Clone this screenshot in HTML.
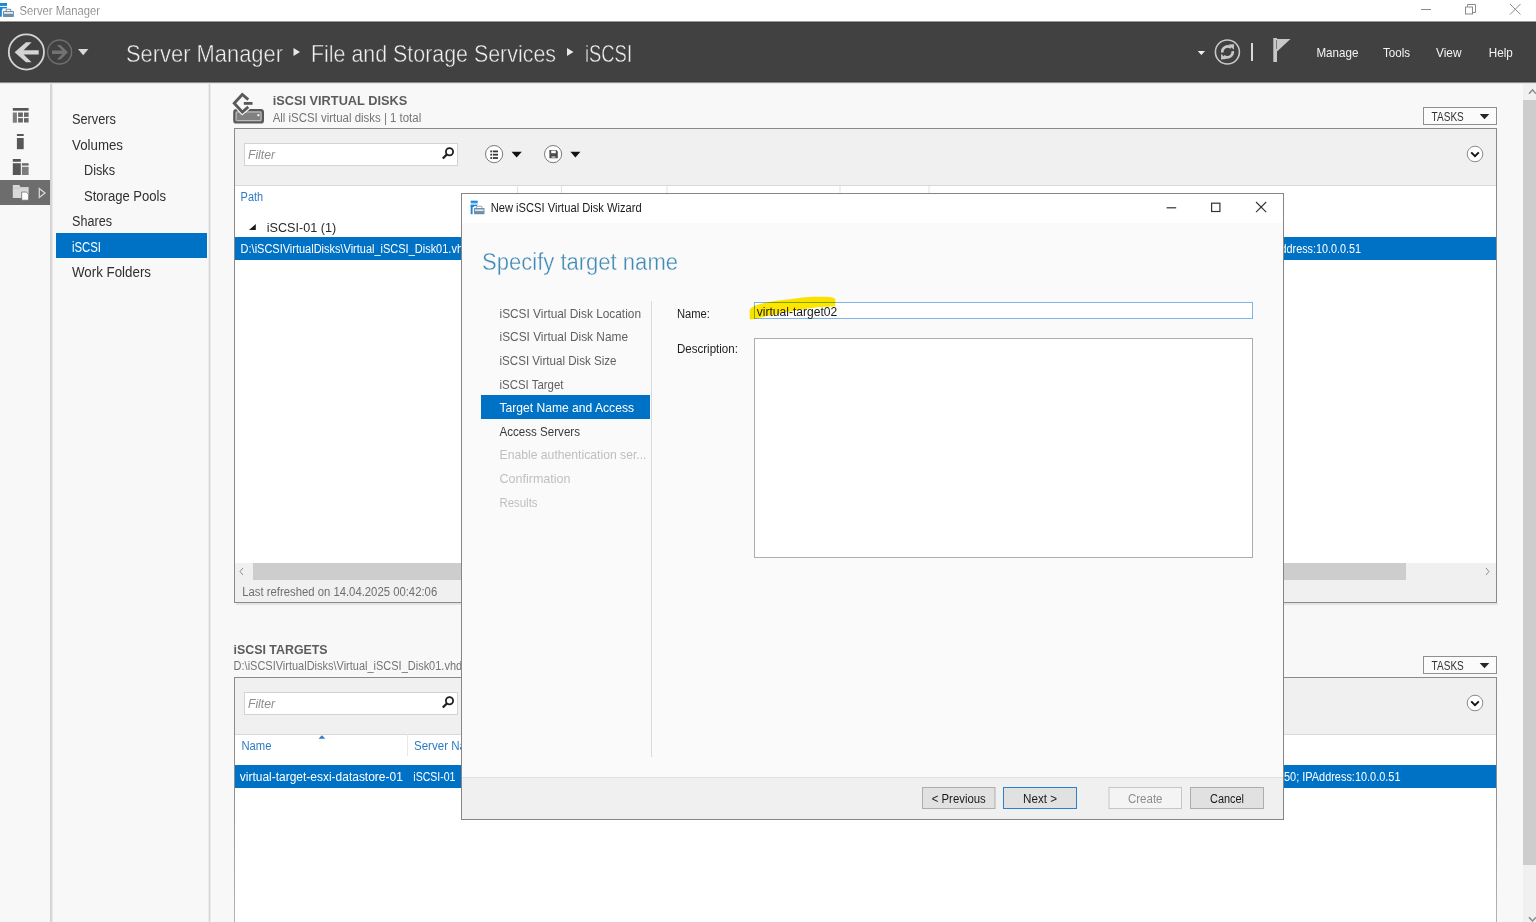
<!DOCTYPE html>
<html><head><meta charset="utf-8"><title>Server Manager - iSCSI</title>
<style>html,body{margin:0;padding:0;background:#f8f8f8;overflow:hidden;width:1536px;height:922px} svg{display:block} text{white-space:pre}</style>
</head><body>
<svg width="1536" height="922" viewBox="0 0 1536 922" font-family='"Liberation Sans", sans-serif' shape-rendering="auto"><rect x="0" y="0" width="1536" height="922" fill="#f8f8f8" />
<rect x="0" y="0" width="1536" height="22" fill="#ffffff" />
<rect x="0" y="3" width="7" height="2.9" fill="#1a85d9" />
<path d="M0 7 H7 V8.4 L5 10.2 H1.8 V16.8 H0 Z" fill="#1a85d9"/>
<rect x="2.4" y="8.4" width="12.3" height="9" fill="#ffffff" />
<path d="M6.2 11 V9.8 Q6.2 9.2 6.8 9.2 H10.2 Q10.8 9.2 10.8 9.8 V11" fill="none" stroke="#7892a8" stroke-width="1.1"/>
<rect x="3" y="10.9" width="10.9" height="6" fill="#6f8ea8" rx="0.6"/>
<rect x="4" y="12" width="8.9" height="1.8" fill="#e3eaf0" />
<text x="19.5" y="14.8" font-size="12.6" fill="#747474" font-weight="normal" font-style="normal" textLength="80.5" lengthAdjust="spacingAndGlyphs" stroke="#ffffff" stroke-width="0.2">Server Manager</text>
<line x1="1421" y1="9.5" x2="1431" y2="9.5" stroke="#8a8a8a" stroke-width="1" />
<rect x="1465.5" y="7.0" width="7" height="7" fill="none" stroke="#8a8a8a" stroke-width="1" />
<path d="M1467.5 6.5 V4.5 H1475.5 V12.5 H1473" fill="none" stroke="#8a8a8a" stroke-width="1"/>
<line x1="1510" y1="4" x2="1520.5" y2="14.5" stroke="#8a8a8a" stroke-width="1" />
<line x1="1520.5" y1="4" x2="1510" y2="14.5" stroke="#8a8a8a" stroke-width="1" />
<rect x="0" y="22" width="1536" height="60" fill="#414141" />
<rect x="0" y="21" width="1536" height="1" fill="#9c9c9c" />
<rect x="0" y="22" width="1536" height="1" fill="#393939" />
<circle cx="26.4" cy="52" r="17.6" fill="none" stroke="#d4d4d4" stroke-width="1.8"/>
<path d="M14.6 52.3 L26 42.2 L31.6 42.2 L23.6 50.2 L38.7 50.2 L38.7 54.5 L23.6 54.5 L31.6 62.3 L26 62.3 Z" fill="#d4d4d4"/>
<circle cx="59.6" cy="52" r="12" fill="none" stroke="#6f6f6f" stroke-width="1.4"/>
<path d="M68 52.3 L60.5 45.1 L57 45.1 L62.3 50.6 L52 50.6 L52 53.9 L62.3 53.9 L57 59.4 L60.5 59.4 Z" fill="#727272"/>
<path d="M78 49 L88.4 49 L83.2 55.3 Z" fill="#d8d8d8"/>
<text x="126" y="61.7" font-size="24" fill="#f0f0f0" font-weight="normal" font-style="normal" textLength="157" lengthAdjust="spacingAndGlyphs" stroke="#414141" stroke-width="0.45">Server Manager</text>
<path d="M293.5 48 L300 52 L293.5 56 Z" fill="#e8e8e8"/>
<text x="311" y="61.7" font-size="24" fill="#f0f0f0" font-weight="normal" font-style="normal" textLength="245" lengthAdjust="spacingAndGlyphs" stroke="#414141" stroke-width="0.45">File and Storage Services</text>
<path d="M567 48 L573.5 52 L567 56 Z" fill="#e8e8e8"/>
<text x="585" y="61.7" font-size="24" fill="#f0f0f0" font-weight="normal" font-style="normal" textLength="47" lengthAdjust="spacingAndGlyphs" stroke="#414141" stroke-width="0.45">iSCSI</text>
<path d="M1197.7 51 L1205 51 L1201.35 55 Z" fill="#f0f0f0"/>
<circle cx="1227.4" cy="52" r="12" fill="none" stroke="#c8c8c8" stroke-width="1.6"/>
<path d="M1222.2 52.5 A5.6 5.6 0 0 1 1231.2 47.6" fill="none" stroke="#c8c8c8" stroke-width="2.6"/><path d="M1228.6 44.6 L1234 44.2 L1233.8 49.8 Z" fill="#c8c8c8"/>
<path d="M1232.8 51.2 A5.6 5.6 0 0 1 1223.8 56.1" fill="none" stroke="#c8c8c8" stroke-width="2.6"/><path d="M1226.4 59 L1221 59.4 L1221.2 53.8 Z" fill="#c8c8c8"/>
<rect x="1251" y="43" width="2" height="18" fill="#d8d8d8" />
<rect x="1273.3" y="38" width="3.7" height="24" fill="#c8c8c8" />
<rect x="1276" y="40" width="1.1" height="9" fill="#7a7a7a" />
<path d="M1277 39 L1290.5 39 L1277 51.5 Z" fill="#c8c8c8"/>
<text x="1316.4" y="56.8" font-size="13" fill="#f4f4f4" font-weight="normal" font-style="normal" textLength="42" lengthAdjust="spacingAndGlyphs" >Manage</text>
<text x="1383" y="56.8" font-size="13" fill="#f4f4f4" font-weight="normal" font-style="normal" textLength="27" lengthAdjust="spacingAndGlyphs" >Tools</text>
<text x="1436" y="56.8" font-size="13" fill="#f4f4f4" font-weight="normal" font-style="normal" textLength="25.5" lengthAdjust="spacingAndGlyphs" >View</text>
<text x="1488.8" y="56.8" font-size="13" fill="#f4f4f4" font-weight="normal" font-style="normal" textLength="24" lengthAdjust="spacingAndGlyphs" >Help</text>
<rect x="0" y="82" width="50" height="840" fill="#f8f8f8" />
<rect x="50" y="82" width="1" height="840" fill="#d3d3d3" />
<rect x="51" y="82" width="1" height="840" fill="#d9d9d9" />
<rect x="52" y="82" width="1" height="840" fill="#e8e8e8" />
<rect x="53" y="82" width="1" height="840" fill="#f2f2f2" />
<rect x="12.8" y="108" width="15.8" height="2.7" fill="#575757" />
<rect x="12.8" y="112.5" width="4.1" height="10.2" fill="#7d7d7d" />
<rect x="18.1" y="112.5" width="4.8" height="4.4" fill="#666666" />
<rect x="24" y="112.5" width="4.6" height="4.4" fill="#666666" />
<rect x="18.1" y="118.1" width="4.8" height="4.4" fill="#666666" />
<rect x="24" y="118.1" width="4.6" height="4.4" fill="#666666" />
<rect x="16.9" y="134" width="6.8" height="2" fill="#575757" />
<rect x="16.9" y="138" width="6.8" height="11.2" fill="#575757" />
<rect x="12.8" y="159" width="8" height="2.8" fill="#575757" />
<rect x="12.8" y="163.2" width="8" height="11.8" fill="#575757" />
<rect x="21.9" y="163.2" width="6.7" height="2.4" fill="#6a6a6a" />
<rect x="21.9" y="166.8" width="6.7" height="8.2" fill="#7d7d7d" />
<rect x="0" y="180" width="50" height="25" fill="#6d6d6d" />
<path d="M12.8 185 H19.3 L20.5 187 H28.6 V197.9 H12.8 Z" fill="#d9d9d9"/>
<path d="M12.8 188 H28.6" stroke="#c4c4c4" stroke-width="0.8"/>
<path d="M21.7 192 H26.2 L28.6 194.4 V200.2 H21.7 Z" fill="#ffffff" stroke="#6d6d6d" stroke-width="0.8"/>
<path d="M39.3 188.5 L45 193 L39.3 197.5 Z" fill="none" stroke="#d6d6d6" stroke-width="1.3"/>
<rect x="53" y="82" width="156" height="840" fill="#f8f8f8" />
<rect x="208" y="82" width="1" height="840" fill="#ececec" />
<rect x="209" y="82" width="1" height="840" fill="#d4d4d4" />
<rect x="210" y="82" width="1" height="840" fill="#ececec" />
<rect x="56" y="233" width="151" height="25" fill="#0072c6" />
<text x="72" y="124" font-size="14" fill="#303030" font-weight="normal" font-style="normal" textLength="44" lengthAdjust="spacingAndGlyphs" >Servers</text>
<text x="72" y="149.5" font-size="14" fill="#303030" font-weight="normal" font-style="normal" textLength="51" lengthAdjust="spacingAndGlyphs" >Volumes</text>
<text x="84" y="175" font-size="14" fill="#303030" font-weight="normal" font-style="normal" textLength="31" lengthAdjust="spacingAndGlyphs" >Disks</text>
<text x="84" y="200.5" font-size="14" fill="#303030" font-weight="normal" font-style="normal" textLength="82" lengthAdjust="spacingAndGlyphs" >Storage Pools</text>
<text x="72" y="226" font-size="14" fill="#303030" font-weight="normal" font-style="normal" textLength="40" lengthAdjust="spacingAndGlyphs" >Shares</text>
<text x="72" y="251.5" font-size="14" fill="#ffffff" font-weight="normal" font-style="normal" textLength="29" lengthAdjust="spacingAndGlyphs" >iSCSI</text>
<text x="72" y="277" font-size="14" fill="#303030" font-weight="normal" font-style="normal" textLength="79" lengthAdjust="spacingAndGlyphs" >Work Folders</text>
<rect x="211" y="82" width="1312" height="840" fill="#f8f8f8" />
<rect x="234.2" y="110" width="28.8" height="12.6" rx="2.2" fill="#808080" stroke="#595959" stroke-width="2"/>
<rect x="236.2" y="112" width="24.8" height="8.6" rx="1" fill="none" stroke="#d0d0d0" stroke-width="0.8"/>
<path d="M248.3 99.6 L242.3 94.5 L234.2 103.3 L242.3 112 L248.3 106.9" fill="none" stroke="#f7f7f7" stroke-width="5.2"/>
<path d="M248.3 99.6 L242.3 94.5 L234.2 103.3 L242.3 112 L248.3 106.9" fill="none" stroke="#595959" stroke-width="2.8" stroke-linejoin="miter"/>
<rect x="243.8" y="102" width="8.7" height="2.8" fill="#595959" />
<rect x="257.4" y="114.2" width="2" height="2" fill="#ffffff" />
<text x="272.7" y="105" font-size="13.2" fill="#5c5c5c" font-weight="bold" font-style="normal" textLength="134.5" lengthAdjust="spacingAndGlyphs" >iSCSI VIRTUAL DISKS</text>
<text x="272.7" y="121.7" font-size="12" fill="#747474" font-weight="normal" font-style="normal" textLength="148.5" lengthAdjust="spacingAndGlyphs" >All iSCSI virtual disks | 1 total</text>
<rect x="1423.5" y="107.5" width="73" height="17" fill="#fbfbfb" stroke="#8f8f8f" stroke-width="1" />
<text x="1431.6" y="120.8" font-size="12.5" fill="#333333" font-weight="normal" font-style="normal" textLength="32.2" lengthAdjust="spacingAndGlyphs" >TASKS</text>
<path d="M1479.7 114 L1489.3 114 L1484.5 119.3 Z" fill="#262626"/>
<rect x="235" y="129" width="1261" height="56" fill="#f0f0f0" />
<line x1="234" y1="128.5" x2="1497" y2="128.5" stroke="#8a8a8a" stroke-width="1" />
<line x1="235" y1="185.5" x2="1496" y2="185.5" stroke="#d9d9d9" stroke-width="1" />
<rect x="244.5" y="143.5" width="213" height="22" fill="#ffffff" stroke="#d3d3d3" stroke-width="1" />
<text x="248" y="158.5" font-size="12" fill="#8c8c8c" font-weight="normal" font-style="italic" textLength="27" lengthAdjust="spacingAndGlyphs" >Filter</text>
<circle cx="449.5" cy="151.7" r="3.6" fill="none" stroke="#1e1e1e" stroke-width="1.8"/>
<path d="M446.8 154.4 L442.8 158.6" stroke="#1e1e1e" stroke-width="2.2"/>
<circle cx="1475" cy="154" r="7.8" fill="#ffffff" stroke="#8c8c8c" stroke-width="1"/>
<path d="M1471.2 152.3 L1475 156.2 L1478.8 152.3" fill="none" stroke="#111" stroke-width="1.9"/>
<circle cx="494.1" cy="154.1" r="8.6" fill="#ffffff" stroke="#7a7a7a" stroke-width="1"/>
<rect x="490.3" y="150.5" width="1.7" height="1.8" fill="#3a3a3a" />
<rect x="492.8" y="150.5" width="5.2" height="1.8" fill="#3a3a3a" />
<rect x="490.3" y="153.8" width="1.7" height="1.8" fill="#3a3a3a" />
<rect x="492.8" y="153.8" width="5.2" height="1.8" fill="#3a3a3a" />
<rect x="490.3" y="157.1" width="1.7" height="1.8" fill="#3a3a3a" />
<rect x="492.8" y="157.1" width="5.2" height="1.8" fill="#3a3a3a" />
<path d="M511.5 151.8 L521.8 151.8 L516.65 157.5 Z" fill="#111"/>
<circle cx="553.1" cy="154.1" r="8.6" fill="#ffffff" stroke="#7a7a7a" stroke-width="1"/>
<path d="M549.4 150 H556.4 L557.8 151.4 V158.2 H549.4 Z" fill="#4d4d4d"/>
<rect x="551.2" y="150.6" width="4.6" height="2.6" fill="#ffffff" />
<rect x="551.6" y="156.2" width="3.8" height="2" fill="#b0b0b0" />
<path d="M570.4 151.8 L580.4 151.8 L575.4 157.5 Z" fill="#111"/>
<rect x="235" y="186" width="1261" height="377" fill="#ffffff" />
<line x1="234.5" y1="128" x2="234.5" y2="602.5" stroke="#8a8a8a" stroke-width="1" />
<line x1="1496.5" y1="128" x2="1496.5" y2="602.5" stroke="#8a8a8a" stroke-width="1" />
<line x1="234" y1="602.5" x2="1497" y2="602.5" stroke="#8a8a8a" stroke-width="1" />
<rect x="236" y="603" width="1262" height="2" fill="#e4e4e4"/>
<line x1="517.5" y1="186" x2="517.5" y2="210" stroke="#e1e1e1" stroke-width="1" />
<line x1="561.5" y1="186" x2="561.5" y2="210" stroke="#e1e1e1" stroke-width="1" />
<line x1="667" y1="186" x2="667" y2="210" stroke="#e1e1e1" stroke-width="1" />
<line x1="840" y1="186" x2="840" y2="210" stroke="#e1e1e1" stroke-width="1" />
<line x1="929" y1="186" x2="929" y2="210" stroke="#e1e1e1" stroke-width="1" />
<text x="240.6" y="201.4" font-size="12" fill="#2e7bc4" font-weight="normal" font-style="normal" textLength="22.5" lengthAdjust="spacingAndGlyphs" >Path</text>
<path d="M249 230 L255.8 230 L255.8 224 Z" fill="#1a1a1a"/>
<text x="266.7" y="231.6" font-size="13.5" fill="#2a2a2a" font-weight="normal" font-style="normal" textLength="69.5" lengthAdjust="spacingAndGlyphs" >iSCSI-01 (1)</text>
<rect x="235" y="237" width="1261" height="23" fill="#0072c6" />
<text x="240.6" y="253" font-size="12" fill="#ffffff" font-weight="normal" font-style="normal" textLength="234" lengthAdjust="spacingAndGlyphs" >D:\iSCSIVirtualDisks\Virtual_iSCSI_Disk01.vhdx</text>
<text x="1264" y="253" font-size="12" fill="#ffffff" font-weight="normal" font-style="normal" textLength="97" lengthAdjust="spacingAndGlyphs" >IPAddress:10.0.0.51</text>
<rect x="235" y="563" width="1261" height="17" fill="#f0f0f0" />
<rect x="253" y="563" width="1153" height="17" fill="#cdcdcd" />
<path d="M243 568 L240 571.5 L243 575" fill="none" stroke="#8a8a8a" stroke-width="1"/>
<path d="M1486 568 L1489 571.5 L1486 575" fill="none" stroke="#8a8a8a" stroke-width="1"/>
<rect x="235" y="580" width="1261" height="22" fill="#f0f0f0" />
<text x="242.2" y="596" font-size="12" fill="#6e6e6e" font-weight="normal" font-style="normal" textLength="195" lengthAdjust="spacingAndGlyphs" >Last refreshed on 14.04.2025 00:42:06</text>
<text x="233.6" y="653.75" font-size="13.2" fill="#5c5c5c" font-weight="bold" font-style="normal" textLength="94" lengthAdjust="spacingAndGlyphs" >iSCSI TARGETS</text>
<text x="233.6" y="670" font-size="12" fill="#747474" font-weight="normal" font-style="normal" textLength="234" lengthAdjust="spacingAndGlyphs" >D:\iSCSIVirtualDisks\Virtual_iSCSI_Disk01.vhdx</text>
<rect x="1423.5" y="656.5" width="73" height="17" fill="#fbfbfb" stroke="#8f8f8f" stroke-width="1" />
<text x="1431.6" y="669.8" font-size="12.5" fill="#333333" font-weight="normal" font-style="normal" textLength="32.2" lengthAdjust="spacingAndGlyphs" >TASKS</text>
<path d="M1479.7 663 L1489.3 663 L1484.5 668.3 Z" fill="#262626"/>
<rect x="235" y="734" width="1261" height="188" fill="#ffffff" />
<rect x="235" y="678" width="1261" height="56" fill="#f0f0f0" />
<line x1="234" y1="677.5" x2="1497" y2="677.5" stroke="#8a8a8a" stroke-width="1" />
<line x1="235" y1="734.5" x2="1496" y2="734.5" stroke="#d9d9d9" stroke-width="1" />
<rect x="244.5" y="692.5" width="213" height="22" fill="#ffffff" stroke="#d3d3d3" stroke-width="1" />
<text x="248" y="707.5" font-size="12" fill="#8c8c8c" font-weight="normal" font-style="italic" textLength="27" lengthAdjust="spacingAndGlyphs" >Filter</text>
<circle cx="449.5" cy="700.7" r="3.6" fill="none" stroke="#1e1e1e" stroke-width="1.8"/>
<path d="M446.8 703.4 L442.8 707.6" stroke="#1e1e1e" stroke-width="2.2"/>
<circle cx="1475" cy="703" r="7.8" fill="#ffffff" stroke="#8c8c8c" stroke-width="1"/>
<path d="M1471.2 701.3 L1475 705.2 L1478.8 701.3" fill="none" stroke="#111" stroke-width="1.9"/>
<defs><linearGradient id="lg1" gradientUnits="userSpaceOnUse" x1="0" y1="677" x2="0" y2="922"><stop offset="0" stop-color="#8a8a8a"/><stop offset="0.45" stop-color="#8f8f8f"/><stop offset="1" stop-color="#b4b4b4"/></linearGradient></defs>
<rect x="234" y="677" width="1" height="245" fill="url(#lg1)"/><rect x="1496" y="677" width="1" height="245" fill="url(#lg1)"/>
<text x="241.4" y="750" font-size="12" fill="#2e7bc4" font-weight="normal" font-style="normal" textLength="30" lengthAdjust="spacingAndGlyphs" >Name</text>
<path d="M318.5 738.8 L325.3 738.8 L321.9 735.2 Z" fill="#2e7bc4"/>
<line x1="407.5" y1="734" x2="407.5" y2="756" stroke="#e8e8e8" stroke-width="1" />
<text x="414" y="750" font-size="12" fill="#2e7bc4" font-weight="normal" font-style="normal" textLength="68" lengthAdjust="spacingAndGlyphs" >Server Name</text>
<rect x="235" y="765" width="1261" height="23" fill="#0072c6" />
<text x="239.8" y="781" font-size="12.5" fill="#ffffff" font-weight="normal" font-style="normal" textLength="163" lengthAdjust="spacingAndGlyphs" >virtual-target-esxi-datastore-01</text>
<text x="413.3" y="781" font-size="12.5" fill="#ffffff" font-weight="normal" font-style="normal" textLength="42.2" lengthAdjust="spacingAndGlyphs" >iSCSI-01</text>
<text x="1284" y="781.2" font-size="12" fill="#ffffff" font-weight="normal" font-style="normal" textLength="116.5" lengthAdjust="spacingAndGlyphs" >50; IPAddress:10.0.0.51</text>
<rect x="1523" y="82" width="13" height="840" fill="#f0f0f0" />
<rect x="1523" y="100" width="13" height="765" fill="#cdcdcd" />
<path d="M1529 93.8 L1532.5 89.8 L1536 93.8" fill="none" stroke="#8a8a8a" stroke-width="1.5"/>
<path d="M1529 917.2 L1532.5 921 L1536 917.2" fill="none" stroke="#8a8a8a" stroke-width="1.5"/>
<rect x="0" y="81" width="1536" height="1" fill="#3b3b3b" />
<rect x="0" y="82" width="1536" height="1" fill="#8c8c8c" />
<rect x="0" y="83" width="1536" height="1" fill="#e6e6e6" />
<rect x="461" y="193" width="823" height="627" fill="#ffffff" />
<rect x="461.5" y="193.5" width="822" height="626" fill="none" stroke="#868686" stroke-width="1" />
<rect x="462" y="223" width="821" height="554" fill="#fafafa" />
<rect x="470.7" y="200.7" width="7" height="2.2" fill="#1a85d9" />
<rect x="470.7" y="202.89999999999998" width="7" height="2.1" fill="#a9d1f1" />
<rect x="470.7" y="205.0" width="6.4" height="2" fill="#1a85d9" />
<rect x="470.7" y="205.0" width="1.9" height="9.2" fill="#1a85d9" />
<rect x="474.0" y="206.1" width="10.5" height="8.2" fill="#ffffff" />
<path d="M476.4 208.0 V206.89999999999998 Q476.4 206.2 477.09999999999997 206.2 H481.3 Q482.0 206.2 482.0 206.89999999999998 V208.0" fill="none" stroke="#8fa6ba" stroke-width="1"/>
<rect x="474.0" y="208.0" width="10.5" height="6.2" fill="#6f8ea8" rx="0.6"/>
<rect x="475.0" y="209.39999999999998" width="8.5" height="1.7" fill="#dfe7ee" />
<text x="490.7" y="212.4" font-size="12.5" fill="#1a1a1a" font-weight="normal" font-style="normal" textLength="151" lengthAdjust="spacingAndGlyphs" >New iSCSI Virtual Disk Wizard</text>
<line x1="1166.6" y1="207.8" x2="1176.2" y2="207.8" stroke="#333" stroke-width="1.2" />
<rect x="1211.6" y="203.2" width="8.3" height="8.3" fill="none" stroke="#333" stroke-width="1.2" />
<line x1="1256" y1="202" x2="1266.2" y2="212.2" stroke="#333" stroke-width="1.1" />
<line x1="1266.2" y1="202" x2="1256" y2="212.2" stroke="#333" stroke-width="1.1" />
<text x="482" y="270.3" font-size="23" fill="#3f8ab5" font-weight="normal" font-style="normal" textLength="196" lengthAdjust="spacingAndGlyphs" stroke="#fafafa" stroke-width="0.35">Specify target name</text>
<rect x="481" y="395" width="169" height="24" fill="#0072c6" />
<text x="499.5" y="317.8" font-size="13.5" fill="#5f5f5f" font-weight="normal" font-style="normal" textLength="141.5" lengthAdjust="spacingAndGlyphs" >iSCSI Virtual Disk Location</text>
<text x="499.5" y="341.40000000000003" font-size="13.5" fill="#5f5f5f" font-weight="normal" font-style="normal" textLength="128.5" lengthAdjust="spacingAndGlyphs" >iSCSI Virtual Disk Name</text>
<text x="499.5" y="365.0" font-size="13.5" fill="#5f5f5f" font-weight="normal" font-style="normal" textLength="117" lengthAdjust="spacingAndGlyphs" >iSCSI Virtual Disk Size</text>
<text x="499.5" y="388.6" font-size="13.5" fill="#5f5f5f" font-weight="normal" font-style="normal" textLength="64" lengthAdjust="spacingAndGlyphs" >iSCSI Target</text>
<text x="499.5" y="412.20000000000005" font-size="13.5" fill="#ffffff" font-weight="normal" font-style="normal" textLength="134.5" lengthAdjust="spacingAndGlyphs" >Target Name and Access</text>
<text x="499.5" y="435.8" font-size="13.5" fill="#3a3a3a" font-weight="normal" font-style="normal" textLength="80.5" lengthAdjust="spacingAndGlyphs" >Access Servers</text>
<text x="499.5" y="459.40000000000003" font-size="13.5" fill="#bfbfbf" font-weight="normal" font-style="normal" textLength="147" lengthAdjust="spacingAndGlyphs" >Enable authentication ser...</text>
<text x="499.5" y="483.0" font-size="13.5" fill="#bfbfbf" font-weight="normal" font-style="normal" textLength="71" lengthAdjust="spacingAndGlyphs" >Confirmation</text>
<text x="499.5" y="506.6" font-size="13.5" fill="#bfbfbf" font-weight="normal" font-style="normal" textLength="38" lengthAdjust="spacingAndGlyphs" >Results</text>
<line x1="651.5" y1="301" x2="651.5" y2="757" stroke="#dadada" stroke-width="1" />
<text x="676.9" y="317.7" font-size="12.5" fill="#1e1e1e" font-weight="normal" font-style="normal" textLength="33" lengthAdjust="spacingAndGlyphs" >Name:</text>
<text x="676.9" y="353" font-size="12.5" fill="#1e1e1e" font-weight="normal" font-style="normal" textLength="61" lengthAdjust="spacingAndGlyphs" >Description:</text>
<rect x="754.5" y="302.5" width="498" height="16" fill="#ffffff" stroke="#7eb4ea" stroke-width="1" />
<rect x="754.5" y="338.5" width="498" height="219" fill="#ffffff" stroke="#abadb3" stroke-width="1" />
<path d="M749.7 310 Q750 307.8 752.5 307.2 L754.3 306 C760 304 765 302.5 768.7 302.2 C775 301 779 300.4 783 300 C790 299 794 298.6 797.3 298.2 C804 297.3 808 296.9 811.6 296.8 L826 296.8 C831 297 834 297.6 835.3 299 L835.3 306.5 C830 306.6 828 306.7 826 306.8 C820 307.2 815 307.6 811.6 308 C803 309.3 796 310.5 790 311.5 C782 313 775 314.5 768.7 315.8 C762 317.2 758 318.2 754.3 319 L749.7 319.6 Z" fill="#ffe600" style="mix-blend-mode:multiply"/>
<text x="756.7" y="315.5" font-size="12" fill="#1a1a1a" font-weight="normal" font-style="normal" textLength="80.5" lengthAdjust="spacingAndGlyphs" >virtual-target02</text>
<line x1="462" y1="777.5" x2="1283" y2="777.5" stroke="#dfdfdf" stroke-width="1" />
<rect x="462" y="778" width="821" height="41" fill="#f0f0f0" />
<rect x="922.5" y="787.5" width="72.5" height="21" fill="#e1e1e1" stroke="#adadad" stroke-width="1" />
<text x="931.75" y="802.6" font-size="12" fill="#1a1a1a" font-weight="normal" font-style="normal" textLength="54" lengthAdjust="spacingAndGlyphs" >&lt; Previous</text>
<rect x="1003.5" y="787.5" width="73" height="21" fill="#e1e1e1" stroke="#2b7fd6" stroke-width="1" />
<text x="1023.0" y="802.6" font-size="12" fill="#1a1a1a" font-weight="normal" font-style="normal" textLength="34" lengthAdjust="spacingAndGlyphs" >Next &gt;</text>
<rect x="1109.0" y="787.5" width="72.5" height="21" fill="#f4f4f4" stroke="#c6c6c6" stroke-width="1" />
<text x="1128.0" y="802.6" font-size="12" fill="#8d8d8d" font-weight="normal" font-style="normal" textLength="34.5" lengthAdjust="spacingAndGlyphs" >Create</text>
<rect x="1190.5" y="787.5" width="73" height="21" fill="#e1e1e1" stroke="#adadad" stroke-width="1" />
<text x="1210.0" y="802.6" font-size="12" fill="#1a1a1a" font-weight="normal" font-style="normal" textLength="34" lengthAdjust="spacingAndGlyphs" >Cancel</text></svg>
</body></html>
